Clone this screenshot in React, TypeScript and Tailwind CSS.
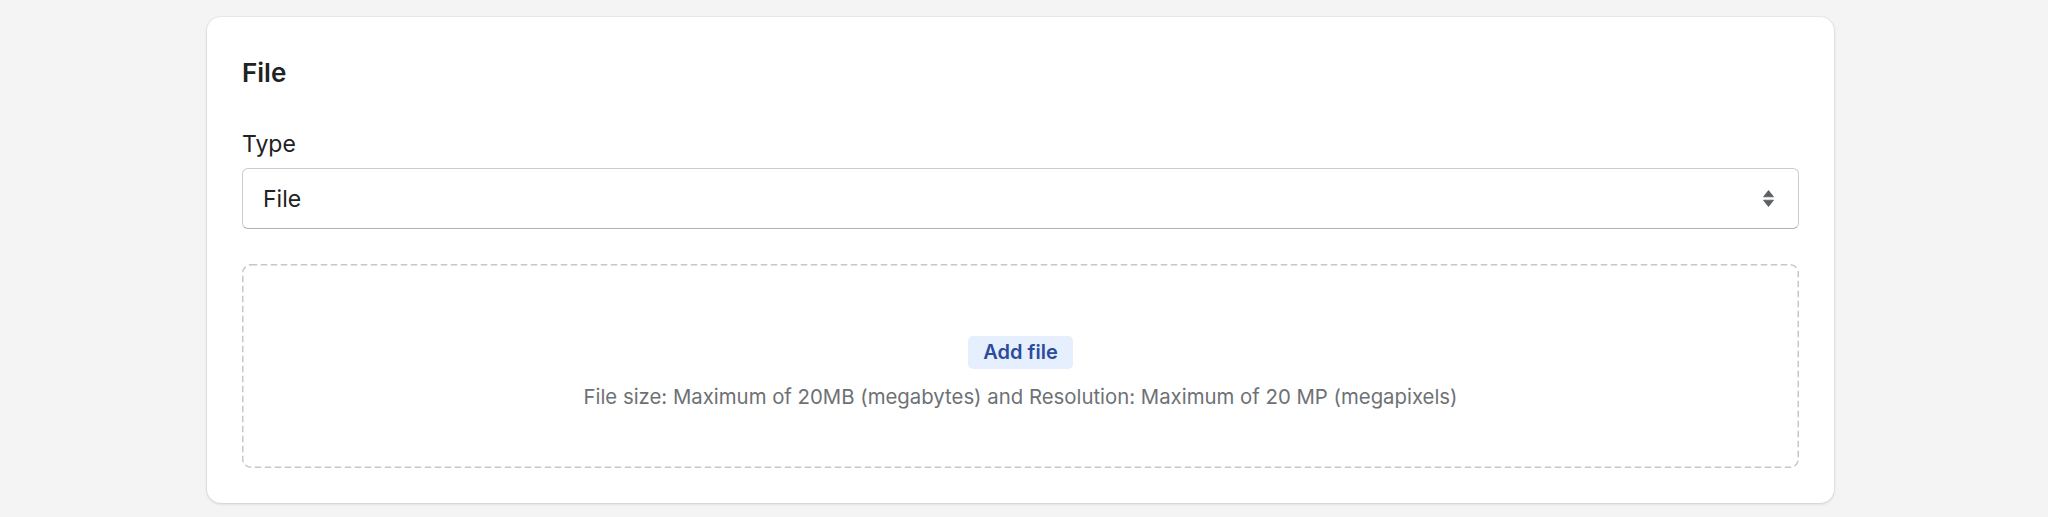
import React from "react";

function SelectArrows() {
  return (
    <svg width="11" height="17" viewBox="0 0 11 17" className="shrink-0">
      <path d="M5.5 0.5 L10.5 6.8 L0.5 6.8 Z" fill="#5c5f62" strokeLinejoin="round" stroke="#5c5f62" strokeWidth="0.8" />
      <path d="M0.5 10.2 L10.5 10.2 L5.5 16.5 Z" fill="#5c5f62" strokeLinejoin="round" stroke="#5c5f62" strokeWidth="0.8" />
    </svg>
  );
}

// dashed outline drawn as svg so the dash length matches
function DashedOutline() {
  return (
    <svg className="pointer-events-none absolute inset-0 h-full w-full" preserveAspectRatio="none">
      <rect
        x="0.75"
        y="0.75"
        width="calc(100% - 1.5px)"
        height="calc(100% - 1.5px)"
        rx="8"
        fill="none"
        stroke="#c4c7cb"
        strokeWidth="1.5"
        strokeDasharray="6.5 3.5"
      />
    </svg>
  );
}

export default function App() {
  return (
    <div
      className="min-h-[517px] w-full bg-[#f4f4f4] pt-[17px]"
      style={{ fontFamily: "Inter, 'Noto Sans', sans-serif" }}
    >
      <div className="ml-[207px] w-[1627px] rounded-[14px] bg-white px-[35px] pt-[40px] pb-[35px] shadow-[0_0_0_1px_rgba(63,63,68,0.04),0_1px_3px_rgba(63,63,68,0.18)]">
        <h2 className="text-[26px] font-semibold leading-[32px] text-[#202223]">File</h2>

        <div className="mt-[40px]">
          <label className="block text-[23px] leading-[30px] text-[#202223]">Type</label>
          <div className="mt-[9px] flex h-[61px] items-center justify-between rounded-[6px] border-[1.5px] border-[#c9cccf] border-b-[#aeb4b9] pl-[20px] pr-[24px]">
            <span className="text-[23px] leading-[30px] text-[#202223]">File</span>
            <SelectArrows />
          </div>
        </div>

        <div className="relative mt-[35px] flex h-[204px] flex-col items-center pt-[72px]">
          <DashedOutline />
          <button className="h-[33px] w-[105px] rounded-[5px] bg-[#e6effd] text-center text-[20px] font-semibold leading-[33px] text-[#2b4c9b]">
            Add file
          </button>
          <p className="mt-[14px] text-[20.35px] leading-[28px] text-[#6d7175]">
            File size: Maximum of 20MB (megabytes) and Resolution: Maximum of 20 MP (megapixels)
          </p>
        </div>
      </div>
    </div>
  );
}
